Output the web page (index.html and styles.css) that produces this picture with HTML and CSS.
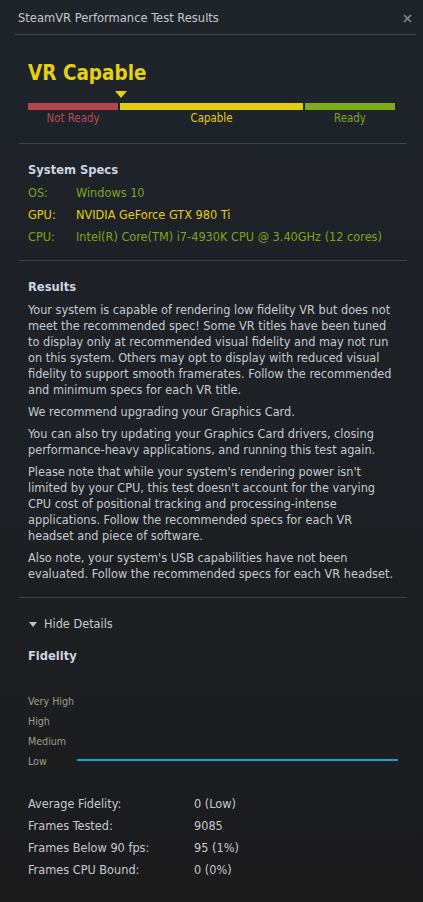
FILE: index.html
```html
<!DOCTYPE html>
<html lang="en">
<head>
<meta charset="utf-8">
<title>SteamVR Performance Test Results</title>
<link rel="stylesheet" href="styles.css">
</head>
<body>
<div class="window">
  <header class="titlebar">
    <span class="title">SteamVR Performance Test Results</span>
    <button class="close" aria-label="Close">
      <svg width="9" height="9" viewBox="0 0 9 9"><path d="M1 1L8 8M8 1L1 8" stroke="currentColor" stroke-width="1.6"/></svg>
    </button>
  </header>

  <section class="status">
    <h1 class="verdict">VR Capable</h1>
    <div class="marker"></div>
    <div class="meter">
      <div class="seg">
        <div class="bar bar-red"></div>
        <span class="seg-label red">Not Ready</span>
      </div>
      <div class="seg">
        <div class="bar bar-yellow"></div>
        <span class="seg-label yellow">Capable</span>
      </div>
      <div class="seg">
        <div class="bar bar-green"></div>
        <span class="seg-label green">Ready</span>
      </div>
    </div>
  </section>

  <hr class="sep">

  <section class="specs">
    <h2 class="heading">System Specs</h2>
    <div class="spec-row green"><span class="spec-key">OS:</span><span>Windows 10</span></div>
    <div class="spec-row yellow"><span class="spec-key">GPU:</span><span>NVIDIA GeForce GTX 980 Ti</span></div>
    <div class="spec-row green"><span class="spec-key">CPU:</span><span>Intel(R) Core(TM) i7-4930K CPU @ 3.40GHz (12 cores)</span></div>
  </section>

  <hr class="sep sep-specs">

  <section class="results">
    <h2 class="heading">Results</h2>
    <p>Your system is capable of rendering low fidelity VR but does not meet the recommended spec! Some VR titles have been tuned to display only at recommended visual fidelity and may not run on this system. Others may opt to display with reduced visual fidelity to support smooth framerates. Follow the recommended and minimum specs for each VR title.</p>
    <p>We recommend upgrading your Graphics Card.</p>
    <p>You can also try updating your Graphics Card drivers, closing performance-heavy applications, and running this test again.</p>
    <p>Please note that while your system's rendering power isn't limited by your CPU, this test doesn't account for the varying CPU cost of positional tracking and processing-intense applications. Follow the recommended specs for each VR headset and piece of software.</p>
    <p>Also note, your system's USB capabilities have not been evaluated. Follow the recommended specs for each VR headset.</p>
  </section>

  <hr class="sep sep-results">

  <section class="details">
    <div class="toggle"><span class="caret"></span>Hide Details</div>
    <h2 class="heading fidelity-title">Fidelity</h2>
    <div class="chart">
      <span class="level">Very High</span>
      <span class="level">High</span>
      <span class="level">Medium</span>
      <span class="level">Low</span>
      <svg class="plot" width="321" height="80" viewBox="0 0 321 80" preserveAspectRatio="none">
        <line x1="0" y1="69" x2="321" y2="69" stroke="#1d9fdb" stroke-width="2"/>
      </svg>
    </div>
    <div class="stats">
      <span>Average Fidelity:</span><span>0 (Low)</span>
      <span>Frames Tested:</span><span>9085</span>
      <span>Frames Below 90 fps:</span><span>95 (1%)</span>
      <span>Frames CPU Bound:</span><span>0 (0%)</span>
    </div>
  </section>
</div>
</body>
</html>
```

FILE: styles.css
```css
* { box-sizing: border-box; }

html, body {
  margin: 0;
  padding: 0;
}

body {
  width: 423px;
  min-height: 902px;
  background: linear-gradient(180deg, #1f242b 0%, #1d2024 55%, #1b1b1c 100%);
  font-family: "DejaVu Sans Condensed", "DejaVu Sans", sans-serif;
  font-stretch: condensed;
  font-size: 12.6px;
  color: #c5cad0;
}

.window {
  width: 423px;
  min-height: 902px;
  display: flex;
  flex-direction: column;
}

.titlebar {
  height: 35px;
  margin: 0 7px 0 15px;
  border-bottom: 1px solid #46494e;
  display: flex;
  align-items: center;
  justify-content: space-between;
  padding: 2px 2px 0 3px;
}

.title {
  color: #c3c8ce;
  font-size: 12.8px;
  line-height: 16px;
}

.close {
  background: none;
  border: 0;
  padding: 0;
  margin: 0 2px 0 0;
  color: #878b90;
  display: flex;
  width: 9px;
  height: 9px;
}

.status {
  padding: 25px 0 0 28px;
}

.verdict {
  margin: 0;
  font-size: 20.5px;
  line-height: 26px;
  font-weight: bold;
  color: #e6d013;
  font-family: "DejaVu Sans", sans-serif;
  font-stretch: condensed;
}

.marker {
  width: 0;
  height: 0;
  margin: 5px 0 0 87px;
  border-left: 6px solid transparent;
  border-right: 6px solid transparent;
  border-top: 7px solid #e6d013;
}

.meter {
  margin-top: 5px;
  display: grid;
  grid-template-columns: 90px 183px 90px;
  column-gap: 2px;
}

.seg {
  display: flex;
  flex-direction: column;
  align-items: center;
}

.bar {
  width: 100%;
  height: 7px;
}

.bar-red { background: #b5464f; }
.bar-yellow { background: #e3cb12; }
.bar-green { background: #7fac1b; }

.seg-label {
  font-size: 11.4px;
  line-height: 15px;
  margin-top: 1px;
}

.red { color: #b94a55; }
.yellow { color: #e4cf13; }
.green { color: #7ea61c; }

.sep {
  margin: 17px 16px 0 19px;
  border: 0;
  height: 1px;
  background: #404348;
}

.heading {
  margin: 0;
  font-size: 12.8px;
  line-height: 18px;
  font-weight: bold;
  color: #cdd6e0;
}

.specs {
  padding: 17px 0 0 28px;
}

.specs .heading {
  margin-bottom: 3px;
}

.spec-row {
  display: flex;
  line-height: 22px;
}

.spec-key {
  width: 48px;
  flex: none;
}

.sep-specs { margin-top: 12px; }

.results {
  padding: 17px 26px 0 28px;
}

.results .heading {
  margin-bottom: 6px;
}

.results p {
  margin: 0 0 6px;
  line-height: 16px;
}

.results p:last-child { margin-bottom: 0; }

.sep-results { margin-top: 15px; }

.details {
  padding: 17px 0 0 28px;
}

.toggle {
  display: flex;
  align-items: center;
  line-height: 18px;
  color: #c5cad0;
}

.caret {
  width: 0;
  height: 0;
  margin: 0 7px 0 1px;
  border-left: 4px solid transparent;
  border-right: 4px solid transparent;
  border-top: 5px solid #c0c4c8;
}

.fidelity-title {
  margin-top: 14px;
}

.chart {
  margin-top: 26px;
  display: grid;
  grid-template-columns: 49px 321px;
  grid-template-rows: repeat(4, 20px);
}

.level {
  grid-column: 1;
  font-size: 10.6px;
  line-height: 20px;
  color: #a29e88;
  white-space: nowrap;
}

.plot {
  grid-column: 2;
  grid-row: 1 / 5;
  display: block;
}

.stats {
  margin-top: 22px;
  display: grid;
  grid-template-columns: 166px auto;
  grid-auto-rows: 22px;
  line-height: 22px;
  color: #c5cad0;
}
```
